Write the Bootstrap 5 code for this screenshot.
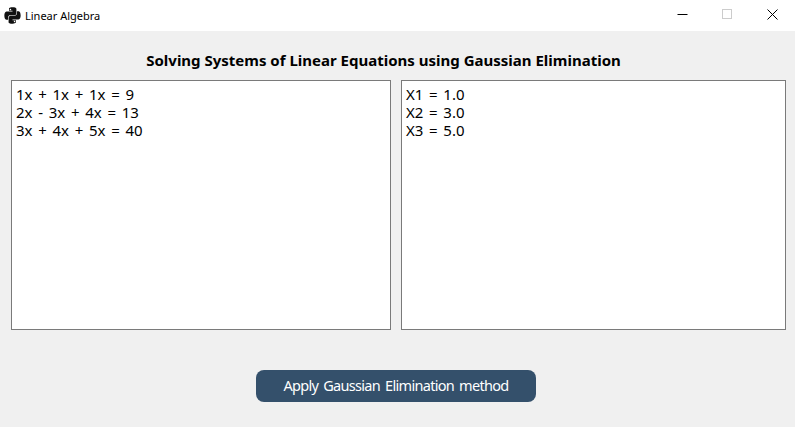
<!DOCTYPE html>
<html lang="en">
<head>
<meta charset="utf-8">
<title>Linear Algebra</title>
<link href="https://cdn.jsdelivr.net/npm/bootstrap@5.3.0/dist/css/bootstrap.min.css" rel="stylesheet">
<style>
html, body { height: 100%; }
body { background: #f0f0f0; font-family: "Noto Sans", "DejaVu Sans", sans-serif; color: #000; overflow: hidden; }
.win-bar { height: 31px; background: #fff; padding-left: 4px; }
.win-title { font-size: 11px; line-height: 1; margin-left: 4px; padding-bottom: 1px; }
.win-btn { width: 45px; height: 29px; }
.win-ctrls { margin-bottom: 2px; }
.app-title { font-size: 15px; font-weight: 700; line-height: 20px; margin-top: 19px; height: 20px; padding-right: 28px; }
.panes { margin: 10px 9px 0 11px; gap: 10px; height: 250px; }
.pane { border: 1px solid #7a7a7a; background: #fff; padding: 4px 4px; font-size: 15px; line-height: 18px; word-spacing: 1.8px; }
.pane-l { width: 380px; }
.pane-r { width: 385px; }
.btn-row { padding-right: 3px; }
.apply-btn { width: 280px; height: 32px; margin-top: 40px; background: #34506b; border: 0; border-radius: 8px; color: #fff; font-size: 14.500px; letter-spacing: -.7px; word-spacing: 2px; padding: 0; }
.apply-btn:hover { background: #34506b; color: #fff; }
</style>
</head>
<body>
<div class="win-bar d-flex align-items-center justify-content-between">
  <div class="d-flex align-items-center">
    <svg width="17" height="17" viewBox="0 0 24 24" aria-hidden="true"><path fill="#111" d="M11.800 .5C6.800 .5 7.100 2.800 7.100 2.800V5.400h4.900v.8H4.500S.5 5.800.5 12s3.300 6 3.300 6h2V15.100s-.1-3.300 3.200-3.300h5.400s3.100 .05 3.100-3V3.700S18.900 .5 11.800 .5zM9.100 2.300a1.100 1.100 0 1 1 0 2.200 1.100 1.100 0 0 1 0-2.200z"/><path fill="#111" d="M12.200 23.500c5 0 4.700-2.300 4.700-2.300V18.600h-4.900v-.8h7.500s4 .4 4-5.800-3.300-6-3.300-6h-2V8.900s.1 3.300-3.200 3.300H9.600s-3.100-.05-3.100 3v5.100S5.100 23.500 12.200 23.500zm2.700-1.800a1.100 1.100 0 1 1 0-2.200 1.100 1.100 0 0 1 0 2.200z"/></svg>
    <span class="win-title">Linear Algebra</span>
  </div>
  <div class="d-flex win-ctrls">
    <div class="win-btn d-flex align-items-center justify-content-center"><svg width="11" height="11" viewBox="0 0 11 11" aria-hidden="true"><path d="M.5 5.500H10.500" stroke="#000" stroke-width="1"/></svg></div>
    <div class="win-btn d-flex align-items-center justify-content-center"><svg width="11" height="11" viewBox="0 0 11 11" aria-hidden="true"><rect x=".5" y=".5" width="9" height="9" fill="none" stroke="#ccc"/></svg></div>
    <div class="win-btn d-flex align-items-center justify-content-center"><svg width="11" height="11" viewBox="0 0 11 11" aria-hidden="true"><path d="M.5.500L10.500 10.500M10.500.500L.5 10.500" stroke="#000" stroke-width="1"/></svg></div>
  </div>
</div>
<h1 class="app-title text-center mb-0">Solving Systems of Linear Equations using Gaussian Elimination</h1>
<div class="panes d-flex">
  <div class="pane pane-l">1x + 1x + 1x = 9<br>2x - 3x + 4x = 13<br>3x + 4x + 5x = 40</div>
  <div class="pane pane-r">X1 = 1.0<br>X2 = 3.0<br>X3 = 5.0</div>
</div>
<div class="btn-row d-flex justify-content-center">
  <button type="button" class="btn apply-btn">Apply Gaussian Elimination method</button>
</div>
</body>
</html>
